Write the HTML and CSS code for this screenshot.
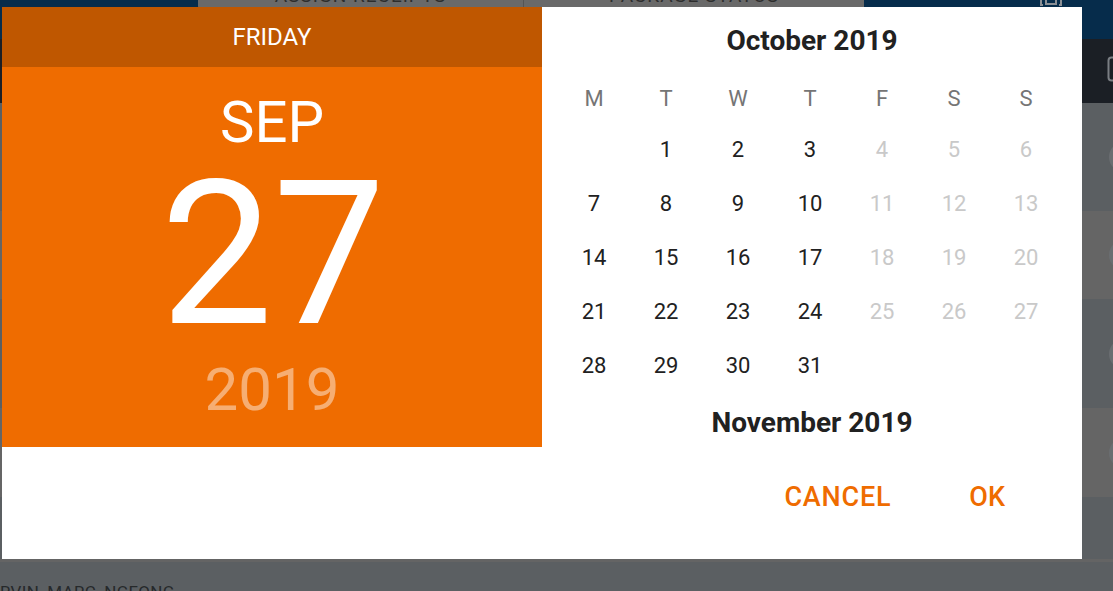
FILE: index.html
```html
<!DOCTYPE html>
<html lang="en">
<head>
<meta charset="utf-8">
<title>Date picker</title>
<link rel="stylesheet" href="styles.css">
</head>
<body>
<div class="app">
  <header class="app-header">
    <nav class="tabs">
      <div class="tab tab-first">ASSIGN RECEIPTS</div>
      <div class="tab">PACKAGE STATUS</div>
    </nav>
    <svg class="scan-icon" width="22" height="8" viewBox="0 0 22 8"><path d="M1 0v5h2M21 0v5h-2M6 0v4h10V0" fill="none" stroke="#8a8f95" stroke-width="2"/></svg>
  </header>
  <div class="toolbar">
    <svg class="tool-icon" width="18" height="26" viewBox="0 0 18 26"><rect x="1.5" y="1.5" width="15" height="23" rx="3" fill="none" stroke="#7a7e83" stroke-width="2"/><path d="M6 7h8M6 11h8M6 15h8M6 19h8" stroke="#7a7e83" stroke-width="1.5"/></svg>
  </div>
  <div class="list">
    <div class="row row-a r1"><span class="avatar"></span></div>
    <div class="row row-b r2"><span class="avatar"></span></div>
    <div class="row row-a r3"><span class="avatar"></span></div>
    <div class="row row-b r4"><span class="avatar"></span></div>
    <div class="row row-a r5"></div>
    <div class="divider"></div>
    <div class="row row-a r6"><span class="names">RVIN, MARC, NGFONG</span></div>
  </div>
</div>

<div class="dialog">
  <section class="date-panel">
    <div class="weekday">FRIDAY</div>
    <div class="date-body">
      <div class="month">SEP</div>
      <div class="day">27</div>
      <div class="year">2019</div>
    </div>
  </section>
  <section class="cal-panel">
    <h2 class="cal-title">October 2019</h2>
    <div class="cal-grid">
      <span class="wd">M</span><span class="wd">T</span><span class="wd">W</span><span class="wd">T</span><span class="wd">F</span><span class="wd">S</span><span class="wd">S</span>
      <span></span><span class="d">1</span><span class="d">2</span><span class="d">3</span><span class="d off">4</span><span class="d off">5</span><span class="d off">6</span>
      <span class="d">7</span><span class="d">8</span><span class="d">9</span><span class="d">10</span><span class="d off">11</span><span class="d off">12</span><span class="d off">13</span>
      <span class="d">14</span><span class="d">15</span><span class="d">16</span><span class="d">17</span><span class="d off">18</span><span class="d off">19</span><span class="d off">20</span>
      <span class="d">21</span><span class="d">22</span><span class="d">23</span><span class="d">24</span><span class="d off">25</span><span class="d off">26</span><span class="d off">27</span>
      <span class="d">28</span><span class="d">29</span><span class="d">30</span><span class="d">31</span><span></span><span></span><span></span>
    </div>
    <h2 class="cal-title next">November 2019</h2>
    <div class="actions">
      <button class="btn btn-cancel">CANCEL</button>
      <button class="btn btn-ok">OK</button>
    </div>
  </section>
</div>
</body>
</html>
```
FILE: styles.css
```css
* { box-sizing: border-box; }
html, body { margin: 0; padding: 0; }
body {
  width: 1113px;
  height: 591px;
  overflow: hidden;
  position: relative;
  background: #5b5f62;
  font-family: Roboto, "Noto Sans", Arial, sans-serif;
}

/* ---------- dimmed app behind dialog ---------- */
.app { width: 1113px; }
.app-header {
  height: 39px;
  background: #062c4b;
  display: flex;
  align-items: flex-start;
  overflow: hidden;
}
.tabs {
  margin-left: 198px;
  width: 666px;
  height: 30px;
  display: flex;
  background: #696969;
  border-radius: 0 0 14px 24px;
}
.tab {
  flex: 1;
  text-align: center;
  font-size: 19px;
  letter-spacing: 1px;
  color: #2d2d2d;
  line-height: 19px;
  margin-top: -14px;
  height: 44px;
}
.tab-first { border-right: 1px solid #555; flex: 0 0 326px; }
.scan-icon { margin-left: 176px; display: block; }

.toolbar {
  height: 64px;
  background: #1b1f25;
  display: flex;
  justify-content: flex-end;
  align-items: flex-start;
  padding-top: 17px;
  overflow: hidden;
}
.tool-icon { margin-right: -12px; display: block; }

.list { display: flex; flex-direction: column; }
.row {
  display: flex;
  align-items: center;
  justify-content: flex-end;
  overflow: hidden;
}
.row-a { background: #5b5f62; }
.row-b { background: #656565; }
.r1 { height: 108px; }
.r2 { height: 88px; }
.r3 { height: 109px; }
.r4 { height: 89px; }
.r5 { height: 62px; }
.r6 { height: 40px; align-items: flex-start; justify-content: flex-start; padding-top: 20px; }
.divider { height: 3px; background: #646464; }
.avatar {
  width: 30px;
  height: 30px;
  border-radius: 50%;
  background: #6a6e71;
  margin-right: -26px;
}
.names {
  font-size: 17px;
  color: #26292b;
  letter-spacing: 0.3px;
}

/* ---------- dialog ---------- */
.dialog {
  position: absolute;
  left: 2px;
  top: 7px;
  width: 1080px;
  height: 552px;
  background: #ffffff;
  display: grid;
  grid-template-columns: 540px 540px;
}

.date-panel { display: flex; flex-direction: column; }
.weekday {
  height: 60px;
  background: #bf5700;
  color: #ffffff;
  font-size: 24px;
  line-height: 60px;
  text-align: center;
}
.date-body {
  height: 380px;
  background: #ef6c00;
  color: #ffffff;
  display: flex;
  flex-direction: column;
  align-items: center;
  padding-top: 26px;
}
.month { font-size: 58px; line-height: 58px; }
.day { font-size: 200px; line-height: 200px; margin-top: 4px; margin-left: 2px; }
.year {
  font-size: 60px;
  line-height: 60px;
  margin-top: 5px;
  color: rgba(255, 255, 255, 0.45);
}

.cal-panel {
  display: flex;
  flex-direction: column;
  padding: 17px 20px 0 16px;
}
.cal-title {
  margin: 0;
  font-size: 28px;
  line-height: 34px;
  font-weight: 700;
  color: #212121;
  text-align: center;
  padding-left: 4px;
}
.cal-grid {
  margin-top: 16px;
  display: grid;
  grid-template-columns: repeat(7, 72px);
  grid-template-rows: 48px repeat(5, 54px);
  font-size: 22px;
}
.cal-grid span {
  display: flex;
  align-items: center;
  justify-content: center;
}
.wd { color: #757575; }
.d { color: #212121; }
.d.off { color: #c9c9c9; }
.next { margin-top: 14px; }

.actions {
  display: flex;
  justify-content: flex-end;
  margin-top: 35px;
  padding-right: 37px;
  gap: 36px;
}
.btn {
  background: none;
  border: 0;
  padding: 0 20px;
  font-family: inherit;
  font-size: 27px;
  font-weight: 500;
  line-height: 44px;
  color: #ef6c00;
}
.btn-cancel { letter-spacing: 0.8px; margin-right: 2px; }
```
